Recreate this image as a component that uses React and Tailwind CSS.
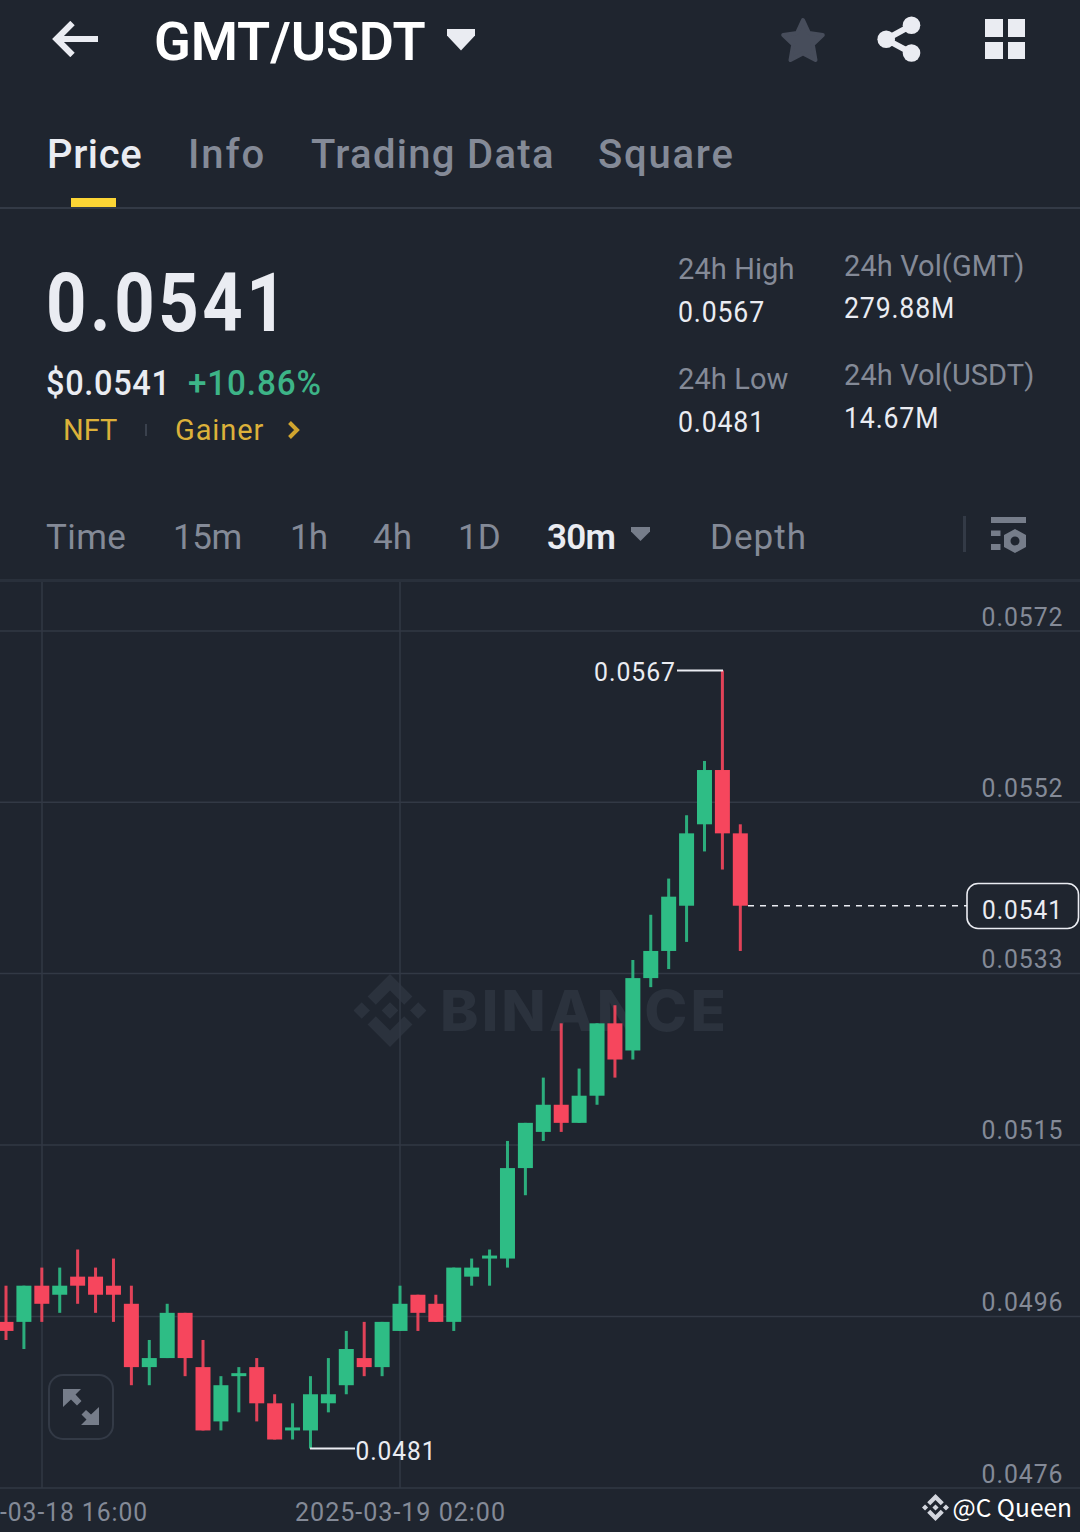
import React from 'react';

const TABS = [
    { label: 'Price', box: 'w-[141px]', text: 'text-[#eaecf2] tracking-[0.6px]', active: true },
    { label: 'Info', box: 'w-[123px]', text: 'text-[#848a97] tracking-[1.9px]' },
    { label: 'Trading Data', box: 'w-[287px]', text: 'text-[#848a97] tracking-[1.3px]' },
    { label: 'Square', box: 'w-[140px]', text: 'text-[#848a97] tracking-[1.8px]' },
];

const INTERVALS = [
    { label: 'Time', box: 'w-[127px]', text: 'tracking-[0.4px]' },
    { label: '15m', box: 'w-[117px]', text: 'tracking-[-0.4px]' },
    { label: '1h', box: 'w-[83px]', text: 'tracking-[-1px]' },
    { label: '4h', box: 'w-[85px]', text: 'tracking-[0px]' },
    { label: '1D', box: 'w-[89px]', text: 'tracking-[0px]' },
];

// [direction, high, body top, body bottom, low] in 0.0001 USDT
const CANDLES = [
    ['down', 499, 495, 494, 493],
    ['up', 499, 499, 495, 492],
    ['down', 501, 499, 497, 495],
    ['up', 501, 499, 498, 496],
    ['down', 503, 500, 499, 497],
    ['down', 501, 500, 498, 496],
    ['down', 502, 499, 498, 495],
    ['down', 499, 497, 490, 488],
    ['up', 493, 491, 490, 488],
    ['up', 497, 496, 491, 491],
    ['down', 496, 496, 491, 489],
    ['down', 493, 490, 483, 483],
    ['up', 489, 488, 484, 483],
    ['up', 490, 489, 489, 485],
    ['down', 491, 490, 486, 484],
    ['down', 487, 486, 482, 482],
    ['up', 486, 483, 483, 482],
    ['up', 489, 487, 483, 481],
    ['up', 491, 487, 486, 485],
    ['up', 494, 492, 488, 487],
    ['down', 495, 491, 490, 489],
    ['up', 495, 495, 490, 489],
    ['up', 499, 497, 494, 494],
    ['down', 498, 498, 496, 494],
    ['down', 498, 497, 495, 495],
    ['up', 501, 501, 495, 494],
    ['up', 502, 501, 500, 499],
    ['up', 503, 502, 502, 499],
    ['up', 515, 512, 502, 501],
    ['up', 517, 517, 512, 509],
    ['up', 522, 519, 516, 515],
    ['down', 528, 519, 517, 516],
    ['up', 523, 520, 517, 517],
    ['up', 528, 528, 520, 519],
    ['down', 530, 528, 524, 522],
    ['up', 535, 533, 525, 524],
    ['up', 540, 536, 533, 532],
    ['up', 544, 542, 536, 534],
    ['up', 551, 549, 541, 537],
    ['up', 557, 556, 550, 547],
    ['down', 567, 556, 549, 545],
    ['down', 550, 549, 541, 536],
];

const AXIS = [
    { price: '0.0572', y: 631 },
    { price: '0.0552', y: 802.3 },
    { price: '0.0533', y: 973.6 },
    { price: '0.0515', y: 1144.9 },
    { price: '0.0496', y: 1316.5 },
    { price: '0.0476', y: 1488 },
];

const toX = (index) => 6 + index * 17.91;
const toY = (tick) => 670.5 + (567 - tick) * 9.047;

const BinanceMark = (props) => (
    <svg viewBox="0 0 126.61 126.61" {...props}>
        <path d="m38.73 53.2 24.59-24.58 24.6 24.6 14.3-14.31L63.32 0l-38.9 38.9zM0 63.31 14.3 49l14.31 14.31-14.31 14.3zM38.73 73.41l24.59 24.59 24.6-24.6 14.31 14.29-38.9 38.91-38.91-38.88zM98 63.31 112.3 49l14.31 14.3-14.31 14.32zM77.83 63.3 63.32 48.78 48.78 63.3l14.54 14.52z" />
    </svg>
);

const Header = () => (
    <header className="flex h-[84px] shrink-0 items-center pl-[52px]">
        <svg className="mb-[6px] h-[36px] w-[46px]" viewBox="0 0 46 36" fill="none" stroke="#eaecf2" strokeWidth="6.2">
            <path d="M46 18H5M20.5 2 4.5 18l16 16" />
        </svg>
        <h1 className="ml-[56px] w-[293px] whitespace-nowrap text-[54px] font-semibold leading-[84px] tracking-[-0.1px] text-white">
            GMT/USDT
        </h1>
        <svg className="mb-[4px] h-[22px] w-[28px]" viewBox="0 0 28 22" fill="#eaecf2">
            <path d="M0 0h28v6.5L14 21.5 0 6.5z" />
        </svg>
        <svg className="mb-[4px] ml-[305px] h-[46px] w-[46px]" viewBox="0 0 46 46" fill="#474d5b" stroke="#474d5b" strokeWidth="4" strokeLinejoin="round">
            <path d="m23 3 6 13 13.800 2-10 9.500 2.700 15.500L23 36.500 10.500 43l2.700-15.500L3.200 18 17 16z" />
        </svg>
        <svg className="mb-[6px] ml-[51px] h-[46px] w-[44px]" viewBox="0 0 44 46" fill="#eaecf2">
            <path d="m34.500 9.300-25.500 14 25.500 13.700" fill="none" stroke="#eaecf2" strokeWidth="6" />
            <circle cx="34.500" cy="9.300" r="8.800" />
            <circle cx="9.200" cy="23.300" r="8.800" />
            <circle cx="34.500" cy="37" r="8.800" />
        </svg>
        <div className="mb-[6px] ml-[64px] grid h-[40px] w-[40px] grid-cols-2 gap-[5px]">
            <span className="bg-[#eaecf2]" />
            <span className="bg-[#eaecf2]" />
            <span className="bg-[#eaecf2]" />
            <span className="bg-[#eaecf2]" />
        </div>
    </header>
);

const Tabs = () => (
    <nav className="flex h-[125px] shrink-0 border-b-2 border-[#333a46] pl-[47px] pt-[43px]">
        {TABS.map((tab) => (
            <div key={tab.label} className={`relative ${tab.box}`}>
                <span className={`whitespace-nowrap text-[40px] font-medium leading-[56px] ${tab.text}`}>{tab.label}</span>
                {tab.active && <span className="absolute bottom-0 left-[24px] h-[9px] w-[45px] bg-[#fcd535]" />}
            </div>
        ))}
    </nav>
);

const Stat = ({ label, value, gap }) => (
    <div className={`flex flex-col whitespace-nowrap text-[29px] leading-[36px] ${gap}`}>
        <span className="tracking-[0.1px] text-[#848a97]">{label}</span>
        <span className="origin-left scale-x-[0.92] tracking-[0.9px] text-[#eaecf2]">{value}</span>
    </div>
);

const Ticker = () => (
    <section className="flex h-[291px] shrink-0 pl-[46px]">
        <div className="w-[632px] pt-[54px]">
            <div className="origin-left scale-x-[0.86] text-[82px] font-bold leading-[80px] tracking-[4.200px] text-[#eaecf2]">0.0541</div>
            <div className="mt-[21px] flex whitespace-nowrap text-[35px] font-medium leading-[40px]">
                <span className="w-[142px] origin-left scale-x-[0.93] tracking-[0.7px] text-[#eaecf2]">$0.0541</span>
                <span className="origin-left scale-x-[0.95] tracking-[0.9px] text-[#3db487]">+10.86%</span>
            </div>
            <div className="mt-[8px] flex items-center pl-[17px] text-[29px] leading-[36px] text-[#dcb13a]">
                <span className="w-[82px]">NFT</span>
                <span className="h-[12px] w-[2px] bg-[#3a414d]" />
                <span className="ml-[28px] w-[113px] tracking-[0.9px]">Gainer</span>
                <svg className="mb-[1px] h-[18px] w-[12px]" viewBox="0 0 12 18" fill="none" stroke="#d0a52f" strokeWidth="4">
                    <path d="m1.500 1.500 7.500 7.500-7.500 7.500" />
                </svg>
            </div>
        </div>
        <div className="w-[166px] pt-[42px]">
            <Stat label="24h High" value="0.0567" gap="gap-[7px]" />
            <Stat label="24h Low" value="0.0481" gap="mt-[31px] gap-[7px]" />
        </div>
        <div className="pt-[39px]">
            <Stat label="24h Vol(GMT)" value="279.88M" gap="gap-[6px]" />
            <Stat label="24h Vol(USDT)" value="14.67M" gap="mt-[31px] gap-[7px]" />
        </div>
    </section>
);

const IntervalBar = () => (
    <section className="flex h-[82px] shrink-0 items-center whitespace-nowrap border-b-[3px] border-[#29303b] pb-[3px] pl-[46px] text-[35px] text-[#848a97]">
        {INTERVALS.map((item) => (
            <span key={item.label} className={`${item.box} ${item.text}`}>{item.label}</span>
        ))}
        <span className="w-[84px] font-semibold tracking-[-0.8px] text-[#eaecf2]">30m</span>
        <svg className="mb-[8px] h-[14px] w-[19px]" viewBox="0 0 19 14" fill="#767d8a">
            <path d="M0 0h19v4.500L9.500 14 0 4.500z" />
        </svg>
        <span className="ml-[60px] w-[253px] tracking-[1px]">Depth</span>
        <span className="mb-[8px] h-[36px] w-[3px] bg-[#333a46]" />
        <svg className="mb-[6px] ml-[25px] h-[36px] w-[36px]" viewBox="0 0 36 36" fill="#767d8a">
            <path d="M0 0h35v6H0zM0 13.500h9.500v5.500H0zM0 27h9.500v6H0z" />
            <path fillRule="evenodd" d="m24 12 11 6v12l-11 6-11-6V18zm0 7.500a4.500 4.500 0 1 0 0 9 4.500 4.500 0 0 0 0-9z" />
        </svg>
    </section>
);

const Candle = ({ candle, index }) => {
    const [direction, high, top, bottom, low] = candle;
    const color = direction === 'up' ? '#2ebd85' : '#f6465d';
    const x = toX(index);
    const height = Math.max(toY(bottom) - toY(top), 3);

    return (
        <g fill={color}>
            <rect x={x - 1.5} y={toY(high)} width="3" height={toY(low) - toY(high)} opacity="0.9" />
            <rect x={x - 7.5} y={toY(bottom) - height} width="15" height={height} />
        </g>
    );
};

const Chart = () => (
    <section className="relative h-[950px] shrink-0">
        <svg className="block h-[950px] w-[1080px]" viewBox="0 582 1080 950">
            <g fill="#2b323d">
                <BinanceMark x="353.500" y="974" width="73" height="73" />
                <text x="440" y="1030.500" fontFamily="Inter" fontWeight="800" fontSize="56" letterSpacing="3" textLength="289" lengthAdjust="spacingAndGlyphs">BINANCE</text>
            </g>
            <g stroke="#323945" strokeWidth="1.500">
                {AXIS.map((line) => (
                    <line key={line.price} x1="0" x2="1080" y1={line.y} y2={line.y} />
                ))}
                <line x1="42" x2="42" y1="582" y2="1488" />
                <line x1="400" x2="400" y1="582" y2="1488" />
            </g>
            {CANDLES.map((candle, index) => (
                <Candle key={index} candle={candle} index={index} />
            ))}
            <g stroke="#eaecf2" strokeWidth="1.800" fill="none">
                <path d="M677 670.500h46M310 1448.500h45" />
                <path d="M748 905.700h219" strokeWidth="1.600" strokeDasharray="6 6" />
                <rect x="967" y="883.500" width="111.500" height="45" rx="11" strokeWidth="1.600" />
            </g>
            <g fontSize="26" letterSpacing="1" fill="#848a97">
                {AXIS.map((line) => (
                    <text key={line.price} x="981.500" y={line.y - 5.5} textLength="82" lengthAdjust="spacingAndGlyphs">{line.price}</text>
                ))}
                <text x="0" y="1520.500" textLength="148" lengthAdjust="spacingAndGlyphs">-03-18 16:00</text>
                <text x="295" y="1520.500" textLength="211" lengthAdjust="spacingAndGlyphs">2025-03-19 02:00</text>
            </g>
            <g fontSize="26" letterSpacing="1" fill="#eaecf2">
                <text x="594" y="680.500" textLength="82" lengthAdjust="spacingAndGlyphs">0.0567</text>
                <text x="355.500" y="1459.500" textLength="81" lengthAdjust="spacingAndGlyphs">0.0481</text>
                <text x="982" y="918.700" textLength="81" lengthAdjust="spacingAndGlyphs">0.0541</text>
            </g>
        </svg>
        <button className="absolute bottom-[92px] left-[48px] flex h-[66px] w-[66px] items-center justify-center rounded-[15px] border-[2.5px] border-[#333a46]">
            <svg className="h-[36px] w-[36px]" viewBox="0 0 36 36" fill="#767d8a">
                <path d="M0 0h18l-5.500 5.500 6 6.500-4.500 4.500-6-6L0 18zM36 36H18l5.500-5.500-5-5L23 21l5 4.500 8-7.500z" />
            </svg>
        </button>
        <div className="absolute bottom-[1px] right-[8px] flex h-[48px] items-center text-white">
            <BinanceMark className="h-[27px] w-[27px]" fill="#d3d6de" />
            <span className="ml-[4px] whitespace-nowrap font-['Noto_Sans_CJK_SC',sans-serif] text-[24.5px] leading-[36px]">@C Queen</span>
        </div>
    </section>
);

const App = () => {
    return (
        <div className="flex h-[1532px] w-[1080px] flex-col overflow-hidden bg-[#1f252f] font-['Roboto',sans-serif]">
            <Header />
            <Tabs />
            <Ticker />
            <IntervalBar />
            <Chart />
        </div>
    );
};

export default App;
